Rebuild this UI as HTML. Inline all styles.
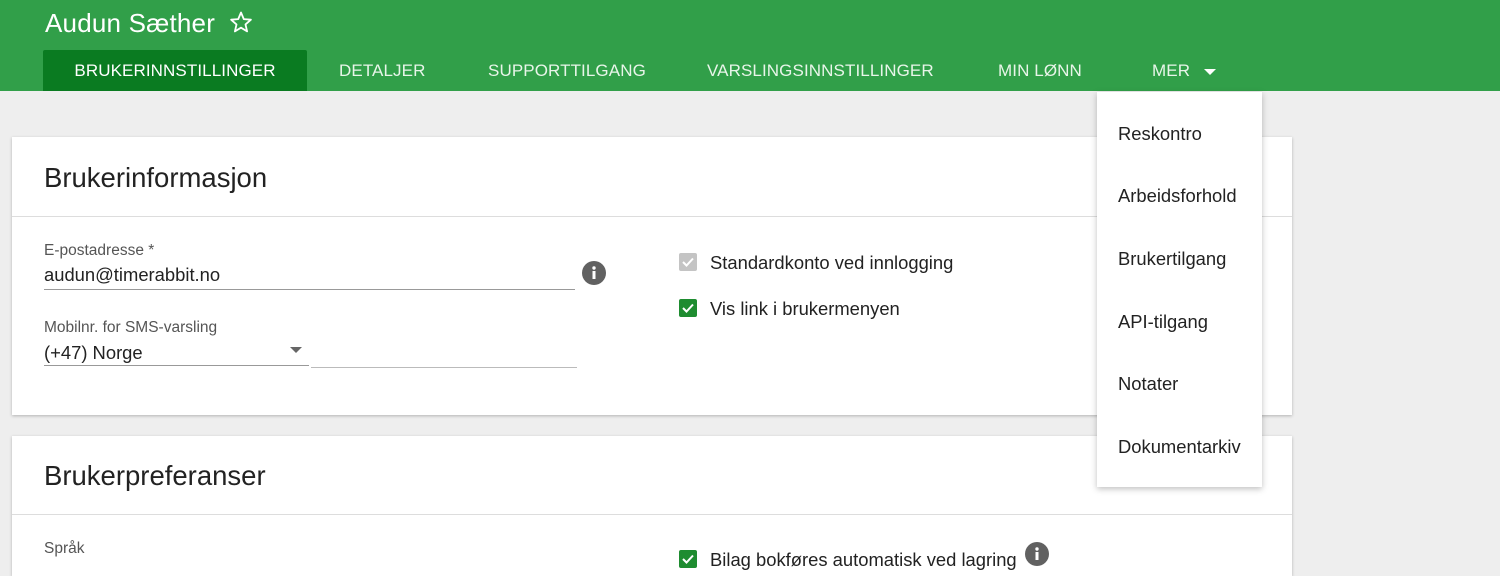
<!DOCTYPE html>
<html><head><style>
body{margin:0;width:1500px;height:566px;overflow:hidden;background:#eeeeee;font-family:"Liberation Sans",sans-serif;position:relative;color:#222}
.hdr{position:absolute;left:0;top:0;width:1500px;height:91px;background:#319f49}
.title{position:absolute;left:45px;top:8px;color:#fff;font-size:26px;letter-spacing:0.2px}
.star{position:absolute;left:229px;top:10px}
.tab{position:absolute;top:50px;height:41px;line-height:42px;color:#e8f5e9;font-size:17px;letter-spacing:0.1px}
.tab.act{background:#0a7b21;color:#fff;left:43px;width:264px;text-align:center;border-radius:2px 2px 0 0}
.card{position:absolute;left:12px;width:1280px;background:#fff;box-shadow:0 1px 3px rgba(0,0,0,.25)}
.card h2{margin:0;position:absolute;left:32px;font-weight:normal;font-size:27.5px;color:#222}
.sep{position:absolute;left:0;width:1280px;height:1px;background:#ddd}
.lbl{position:absolute;font-size:15.5px;color:#555}
.val{position:absolute;font-size:18.4px;color:#222}
.line{position:absolute;height:1px;background:#999}
.cb{position:absolute;width:18px;height:18px;border-radius:2px}
.cbt{position:absolute;font-size:18.4px;color:#222}
.menu{position:absolute;left:1097px;top:92px;width:165px;height:395px;background:#fff;box-shadow:0 2px 6px rgba(0,0,0,.25)}
.mi{position:absolute;left:21px;font-size:18.4px;color:#222}
</style></head><body>
<div class="hdr">
<div class="title">Audun Sæther</div>
<svg class="star" width="24" height="24" viewBox="0 0 24 24"><path d="M12 2.5l2.8 6.6 7.1.6-5.4 4.7 1.6 7-6.1-3.7-6.1 3.7 1.6-7L2.1 9.7l7.1-.6z" fill="none" stroke="#fff" stroke-width="1.8" stroke-linejoin="round"/></svg>
<div class="tab act">BRUKERINNSTILLINGER</div>
<div class="tab" style="left:339px">DETALJER</div>
<div class="tab" style="left:488px">SUPPORTTILGANG</div>
<div class="tab" style="left:707px">VARSLINGSINNSTILLINGER</div>
<div class="tab" style="left:998px">MIN LØNN</div>
<div class="tab" style="left:1152px">MER</div>
<svg style="position:absolute;left:1204px;top:69px" width="12" height="7"><path d="M0 0h12L6 6z" fill="#fff"/></svg>
</div>

<div class="card" style="top:137px;height:278px">
<h2 style="top:25px">Brukerinformasjon</h2>
<div class="sep" style="top:79px"></div>
<div class="lbl" style="left:32px;top:105px">E-postadresse *</div>
<div class="val" style="left:32px;top:127px">audun@timerabbit.no</div>
<div class="line" style="left:32px;top:152px;width:531px"></div>
<svg style="position:absolute;left:570px;top:124px" width="24" height="24"><circle cx="12" cy="12" r="12" fill="#616161"/><rect x="10.5" y="10" width="3" height="8" fill="#fff"/><circle cx="12" cy="7" r="1.7" fill="#fff"/></svg>
<div class="lbl" style="left:32px;top:182px">Mobilnr. for SMS-varsling</div>
<div class="val" style="left:32px;top:205px">(+47) Norge</div>
<svg style="position:absolute;left:278px;top:210px" width="12" height="7"><path d="M0 0h12L6 6z" fill="#666"/></svg>
<div class="line" style="left:32px;top:228px;width:265px"></div>
<div class="line" style="left:299px;top:230px;width:266px;background:#bbb"></div>
<div class="cb" style="left:667px;top:116px;background:#c4c4c4"><svg width="18" height="18"><path d="M4 9l3.5 3.5L14 5.5" stroke="#fff" stroke-width="2" fill="none"/></svg></div>
<div class="cbt" style="left:698px;top:115px">Standardkonto ved innlogging</div>
<div class="cb" style="left:667px;top:162px;background:#1e8c30"><svg width="18" height="18"><path d="M4 9l3.5 3.5L14 5.5" stroke="#fff" stroke-width="2" fill="none"/></svg></div>
<div class="cbt" style="left:698px;top:161px">Vis link i brukermenyen</div>
</div>

<div class="card" style="top:436px;height:140px">
<h2 style="top:24px">Brukerpreferanser</h2>
<div class="sep" style="top:78px"></div>
<div class="lbl" style="left:32px;top:104px">Språk</div>
<div class="cb" style="left:667px;top:114px;background:#1e8c30"><svg width="18" height="18"><path d="M4 9l3.5 3.5L14 5.5" stroke="#fff" stroke-width="2" fill="none"/></svg></div>
<div class="cbt" style="left:698px;top:113px">Bilag bokføres automatisk ved lagring</div>
<svg style="position:absolute;left:1013px;top:106px" width="24" height="24"><circle cx="12" cy="12" r="12" fill="#616161"/><rect x="10.5" y="10" width="3" height="8" fill="#fff"/><circle cx="12" cy="7" r="1.7" fill="#fff"/></svg>
</div>

<div class="menu">
<div class="mi" style="top:31px">Reskontro</div>
<div class="mi" style="top:93px">Arbeidsforhold</div>
<div class="mi" style="top:156px">Brukertilgang</div>
<div class="mi" style="top:219px">API-tilgang</div>
<div class="mi" style="top:281px">Notater</div>
<div class="mi" style="top:344px">Dokumentarkiv</div>
</div>
</body></html>
